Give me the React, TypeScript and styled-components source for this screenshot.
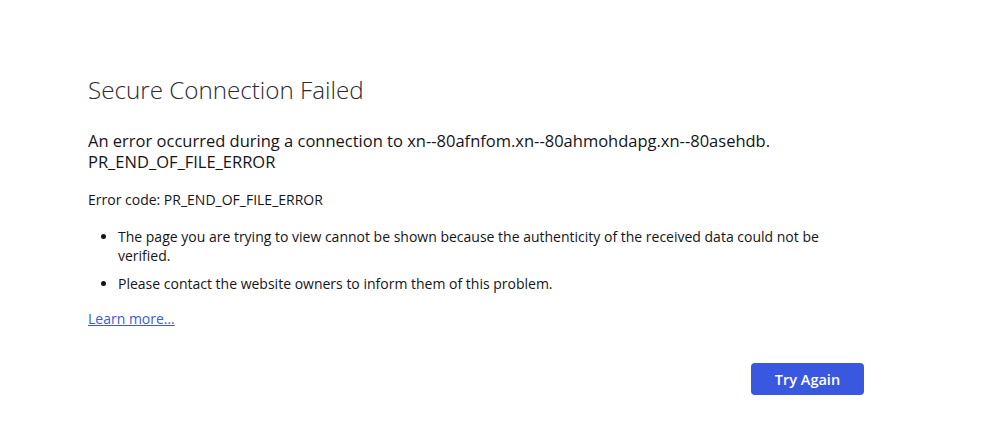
import React from 'react';
import styled, { createGlobalStyle } from 'styled-components';

const GlobalStyle = createGlobalStyle`
  html, body {
    margin: 0;
    padding: 0;
    background: #ffffff;
  }
  body {
    font-family: "Open Sans", "Noto Sans", sans-serif;
    color: #15141a;
  }
`;

const Page = styled.div`
  width: 989px;
  height: 445px;
  box-sizing: border-box;
  padding: 72px 0 0 88px;
`;

const Container = styled.div`
  width: 776px;
  display: flex;
  flex-direction: column;
`;

const Title = styled.h1`
  margin: 0 0 22px;
  font-size: 24.2px;
  font-weight: 300;
  line-height: 36px;
  color: #2b2a33;
`;

const ShortDesc = styled.p`
  margin: 0 0 18px;
  font-size: 16.5px;
  line-height: 21px;
  font-weight: 400;
`;

const ErrorCode = styled.p`
  margin: 0 0 18px;
  font-size: 14px;
  line-height: 19px;
`;

const List = styled.ul`
  margin: 0 0 16px;
  padding-left: 30px;
`;

const Item = styled.li`
  font-size: 14px;
  line-height: 19px;
  margin-bottom: 9px;

  &:last-child {
    margin-bottom: 0;
  }
`;

const LearnMore = styled.a`
  font-size: 14px;
  line-height: 19px;
  color: #3c5ae0;
  text-decoration: underline;
  align-self: flex-start;
`;

const ButtonRow = styled.div`
  display: flex;
  justify-content: flex-end;
  margin-top: 35px;
`;

const PrimaryButton = styled.button`
  width: 113px;
  height: 32px;
  border: none;
  border-radius: 4px;
  background: #3a57e0;
  color: #ffffff;
  font-family: "Open Sans", "Noto Sans", sans-serif;
  font-size: 14.5px;
  font-weight: 600;
  cursor: pointer;
`;

export default function App() {
  return (
    <>
      <GlobalStyle />
      <Page>
        <Container>
          <Title>Secure Connection Failed</Title>
          <ShortDesc>
            An error occurred during a connection to xn--80afnfom.xn--80ahmohdapg.xn--80asehdb.
            <br />
            PR_END_OF_FILE_ERROR
          </ShortDesc>
          <ErrorCode>Error code: PR_END_OF_FILE_ERROR</ErrorCode>
          <List>
            <Item>
              The page you are trying to view cannot be shown because the authenticity of the
              received data could not be verified.
            </Item>
            <Item>Please contact the website owners to inform them of this problem.</Item>
          </List>
          <LearnMore href="#">Learn more…</LearnMore>
          <ButtonRow>
            <PrimaryButton>Try Again</PrimaryButton>
          </ButtonRow>
        </Container>
      </Page>
    </>
  );
}
